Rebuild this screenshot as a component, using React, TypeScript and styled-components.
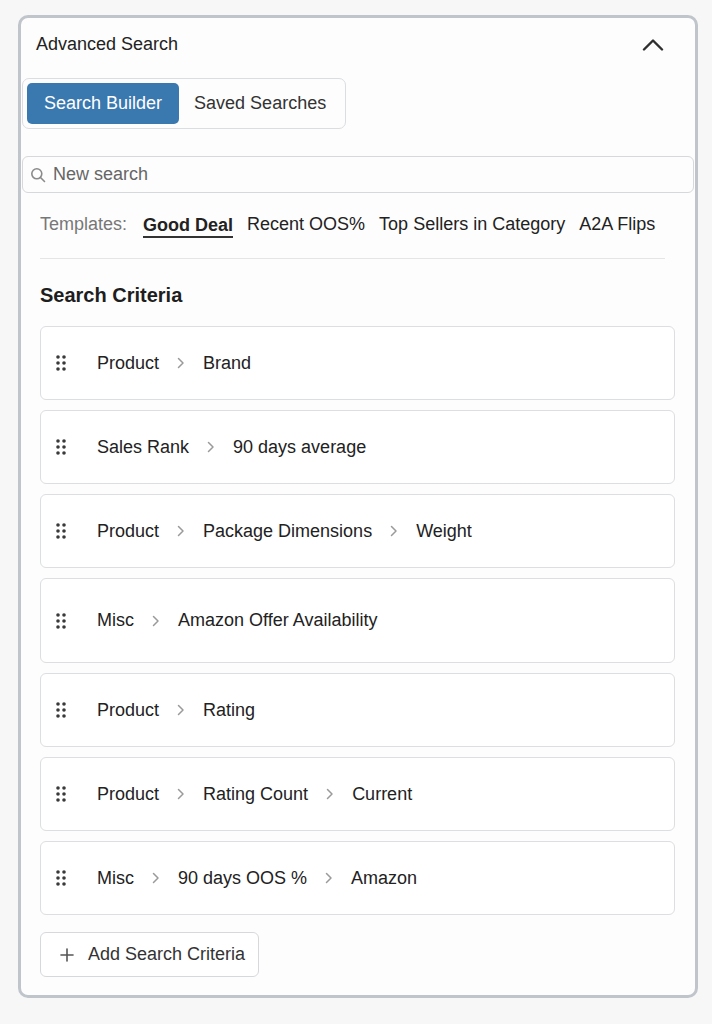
import React from "react";
import styled, { createGlobalStyle } from "styled-components";

const Global = createGlobalStyle`
  html, body { margin: 0; padding: 0; background: #f7f7f7; }
  body { font-family: "Liberation Sans", Arial, sans-serif; color: #222; }
  * { box-sizing: border-box; }
`;

const Page = styled.div`
  padding: 15px 0 0 18px;
`;

const Panel = styled.div`
  width: 680px;
  height: 983px;
  border: 3px solid #c0c5cb;
  border-radius: 10px;
  background: #fdfdfd;
  display: flex;
  flex-direction: column;
`;

const Header = styled.div`
  height: 52px;
  display: flex;
  align-items: center;
  justify-content: space-between;
  padding: 0 31px 0 15px;
`;

const Title = styled.div`
  font-size: 18px;
  color: #222;
`;

const Tabs = styled.div`
  margin: 8px 0 0 1px;
  align-self: flex-start;
  height: 51px;
  border: 1px solid #dcdde0;
  border-radius: 7px;
  padding: 4px 3px 4px 4px;
  display: flex;
`;

const Tab = styled.button<{ $active?: boolean }>`
  flex-shrink: 0;
  white-space: nowrap;
  border: none;
  border-radius: 5px;
  height: 41px;
  padding: 0 ${(p) => (p.$active ? "17px 0 17px" : "16px 0 15px")};
  font-family: inherit;
  font-size: 18px;
  background: ${(p) => (p.$active ? "#3a78b0" : "transparent")};
  color: ${(p) => (p.$active ? "#fff" : "#333")};
  cursor: pointer;
`;

const SearchBox = styled.div`
  margin: 27px 1px 0 1px;
  height: 37px;
  border: 1px solid #d6d8dc;
  border-radius: 6px;
  display: flex;
  align-items: center;
  padding-left: 7px;
  gap: 7px;
`;

const SearchText = styled.span`
  font-size: 18px;
  color: #666;
`;

const Body = styled.div`
  padding: 0 20px 0 19px;
  display: flex;
  flex-direction: column;
`;

const Templates = styled.div`
  margin-top: 20px;
  height: 22px;
  display: flex;
  align-items: center;
  gap: 14px;
  font-size: 18px;
  line-height: 22px;
`;

const TemplatesLabel = styled.span`
  color: #777;
  margin-right: 2px;
`;

const TemplateItem = styled.span<{ $active?: boolean }>`
  color: #222;
  font-weight: ${(p) => (p.$active ? 700 : 400)};
  ${(p) =>
    p.$active
      ? `
    display: inline-block;
    line-height: 20px;
    padding-top: 4px;
    padding-bottom: 1px;
    border-bottom: 2px solid #333;
  `
      : ""}
`;

const Divider = styled.div`
  margin: 23px 10px 0 0;
  height: 1px;
  background: #e4e5e7;
`;

const Heading = styled.h2`
  margin: 24px 0 0 0;
  font-size: 20px;
  line-height: 24px;
  font-weight: 700;
  color: #1e1e1e;
`;

const List = styled.div`
  margin-top: 19px;
  display: flex;
  flex-direction: column;
  gap: 10px;
`;

const Card = styled.div<{ $tall?: boolean }>`
  height: ${(p) => (p.$tall ? "85px" : "74px")};
  border: 1px solid #dcdee1;
  border-radius: 6px;
  background: #fff;
  display: flex;
  align-items: center;
  padding-left: 15px;
`;

const Handle = styled.span`
  display: flex;
  width: 10px;
  margin-right: 31px;
`;

const Crumbs = styled.div`
  display: flex;
  align-items: center;
  gap: 18px;
  font-size: 18px;
  color: #222;
`;

const Sep = styled.span`
  display: flex;
  align-items: center;
`;

const AddButton = styled.button`
  margin-top: 17px;
  align-self: flex-start;
  width: 219px;
  height: 45px;
  border: 1px solid #d6d8dc;
  border-radius: 6px;
  background: #fff;
  display: flex;
  align-items: center;
  padding: 0 0 0 19px;
  gap: 14px;
  font-family: inherit;
  font-size: 18px;
  color: #333;
  cursor: pointer;
`;

const DragDots = () => (
  <svg width="10" height="16" viewBox="0 0 10 16">
    {[2, 8].map((x) =>
      [2, 8, 14].map((y) => <circle key={`${x}-${y}`} cx={x} cy={y} r="1.8" fill="#3a3a3a" />)
    )}
  </svg>
);

const Chevron = () => (
  <svg width="8" height="12" viewBox="0 0 8 12">
    <polyline points="1.5,1.5 6,6 1.5,10.5" fill="none" stroke="#9a9a9a" strokeWidth="1.5" strokeLinecap="round" strokeLinejoin="round" />
  </svg>
);

const criteria: { path: string[]; tall?: boolean }[] = [
  { path: ["Product", "Brand"] },
  { path: ["Sales Rank", "90 days average"] },
  { path: ["Product", "Package Dimensions", "Weight"] },
  { path: ["Misc", "Amazon Offer Availability"], tall: true },
  { path: ["Product", "Rating"] },
  { path: ["Product", "Rating Count", "Current"] },
  { path: ["Misc", "90 days OOS %", "Amazon"] },
];

export default function App() {
  return (
    <>
      <Global />
      <Page>
        <Panel>
          <Header>
            <Title>Advanced Search</Title>
            <svg width="22" height="13" viewBox="0 0 22 13">
              <polyline points="2,11.5 11,2.5 20,11.5" fill="none" stroke="#2f2f2f" strokeWidth="2.4" strokeLinecap="round" strokeLinejoin="round" />
            </svg>
          </Header>
          <Tabs>
            <Tab $active>Search Builder</Tab>
            <Tab>Saved Searches</Tab>
          </Tabs>
          <SearchBox>
            <svg width="16" height="16" viewBox="0 0 16 16">
              <circle cx="6.8" cy="6.8" r="5" fill="none" stroke="#8a8a8a" strokeWidth="1.6" />
              <line x1="10.5" y1="10.5" x2="14.5" y2="14.5" stroke="#8a8a8a" strokeWidth="1.6" strokeLinecap="round" />
            </svg>
            <SearchText>New search</SearchText>
          </SearchBox>
          <Body>
            <Templates>
              <TemplatesLabel>Templates:</TemplatesLabel>
              <TemplateItem $active>Good Deal</TemplateItem>
              <TemplateItem>Recent OOS%</TemplateItem>
              <TemplateItem>Top Sellers in Category</TemplateItem>
              <TemplateItem>A2A Flips</TemplateItem>
            </Templates>
            <Divider />
            <Heading>Search Criteria</Heading>
            <List>
              {criteria.map((c, i) => (
                <Card key={i} $tall={c.tall}>
                  <Handle>
                    <DragDots />
                  </Handle>
                  <Crumbs>
                    {c.path.map((p, j) => (
                      <React.Fragment key={j}>
                        {j > 0 && (
                          <Sep>
                            <Chevron />
                          </Sep>
                        )}
                        <span>{p}</span>
                      </React.Fragment>
                    ))}
                  </Crumbs>
                </Card>
              ))}
            </List>
            <AddButton>
              <svg width="14" height="14" viewBox="0 0 14 14">
                <line x1="7" y1="1" x2="7" y2="13" stroke="#555" strokeWidth="1.6" strokeLinecap="round" />
                <line x1="1" y1="7" x2="13" y2="7" stroke="#555" strokeWidth="1.6" strokeLinecap="round" />
              </svg>
              Add Search Criteria
            </AddButton>
          </Body>
        </Panel>
      </Page>
    </>
  );
}
